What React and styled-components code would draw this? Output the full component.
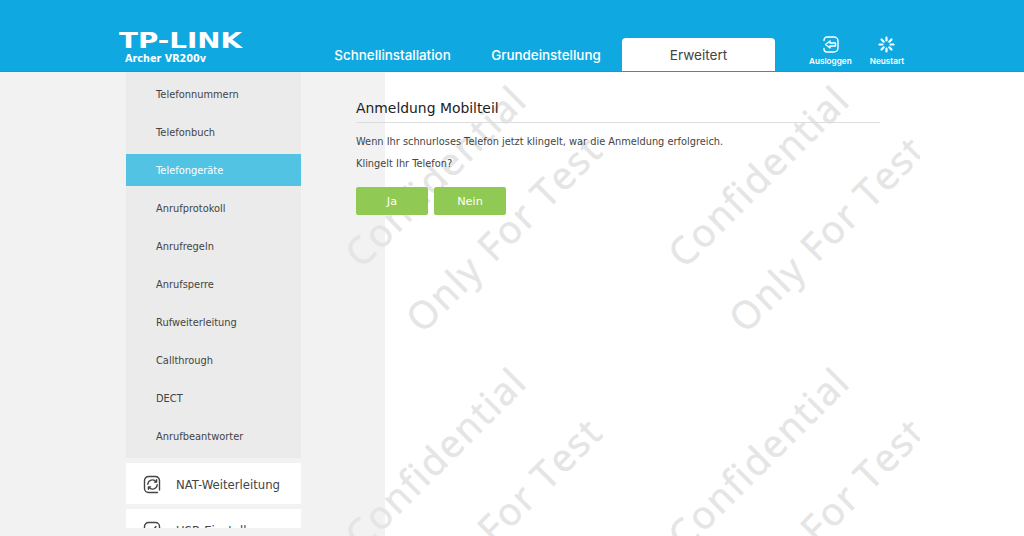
import React from 'react'
import styled, { createGlobalStyle } from 'styled-components'

const GlobalStyle = createGlobalStyle`
  html, body {
    margin: 0;
    padding: 0;
    height: 100%;
    background: #fff;
    overflow: hidden;
    font-family: "DejaVu Sans", Verdana, sans-serif;
  }
`

const Page = styled.div`
  width: 1024px;
  height: 536px;
  overflow: hidden;
  display: flex;
  flex-direction: column;
`

const Header = styled.header`
  height: 71px;
  flex: none;
  background: #10a8e0;
  border-bottom: 1px solid #0f9fd4;
  display: flex;
  align-items: flex-end;
  padding-left: 119px;
  box-sizing: content-box;
`

const Brand = styled.div`
  width: 197px;
  flex: none;
  color: #fff;
  padding-bottom: 6px;
`

const LogoSvg = styled.svg`
  display: block;
  width: 124px;
  height: 20px;
  margin-bottom: 2px;
  overflow: visible;
`

const Model = styled.div`
  font-family: "DejaVu Sans", sans-serif;
  font-size: 9.7px;
  font-weight: 700;
  line-height: 12px;
  padding-left: 6px;
`

const Tabs = styled.nav`
  display: flex;
  align-items: flex-end;
  height: 33px;
  margin-left: 18px;
`

const Tab = styled.div`
  height: 33px;
  box-sizing: border-box;
  display: flex;
  align-items: center;
  justify-content: center;
  font-family: "Inter", "Open Sans", sans-serif;
  font-size: ${p => (p.$active ? 13.6 : 13.4)}px;
  font-weight: ${p => (p.$active ? 400 : 500)};
  width: ${p => p.$w}px;
  margin-right: ${p => p.$gap || 0}px;
  color: ${p => (p.$active ? '#444' : '#fff')};
  background: ${p => (p.$active ? '#fff' : 'transparent')};
  border-radius: 4px 4px 0 0;
  padding-top: 1px;
  white-space: nowrap;
`

const Actions = styled.div`
  display: flex;
  gap: 18px;
  margin-left: 34px;
  padding-bottom: 4px;
`

const Action = styled.div`
  display: flex;
  flex-direction: column;
  align-items: center;
  color: #fff;
  font-family: "Inter", sans-serif;
  font-size: 8.2px;
  font-weight: 600;
  line-height: 11px;
  gap: 3px;
`

const Main = styled.main`
  position: relative;
  flex: 1;
  display: flex;
  min-height: 0;
`

const Side = styled.aside`
  width: 385px;
  flex: none;
  background: #f2f2f2;
  padding-left: 126px;
  box-sizing: border-box;
`

const SideScroll = styled.div`
  width: 175px;
  height: 456px;
  overflow: hidden;
  display: flex;
  flex-direction: column;
`

const SubMenu = styled.ul`
  list-style: none;
  margin: 0;
  padding: 3px 0 3px;
  background: #ebebeb;
  flex: none;
`

const SubItem = styled.li`
  height: 38px;
  box-sizing: border-box;
  display: flex;
  align-items: center;
  padding-left: 30px;
  font-size: 9.85px;
  color: ${p => (p.$active ? '#fff' : '#444')};
  background: ${p => (p.$active ? '#52c3e3' : 'transparent')};
  background-clip: content-box;
  padding-top: ${p => (p.$active ? 3 : 0)}px;
  padding-bottom: ${p => (p.$active ? 3 : 0)}px;
  ${p => p.$active && `
    padding-left: 0;
    text-indent: 30px;
    font-weight: 500;
  `}
`

const MenuCard = styled.div`
  height: 41px;
  flex: none;
  box-sizing: border-box;
  margin-top: 5px;
  padding-top: 2px;
  background: #fff;
  display: flex;
  align-items: center;
  gap: 14px;
  padding-left: 17px;
  font-size: 11.7px;
  color: #444;
`

const Watermark = styled.div`
  position: absolute;
  left: 345px;
  top: 0;
  width: 575px;
  height: 464px;
  overflow: hidden;
  pointer-events: none;
  display: grid;
  grid-template-columns: repeat(2, 323px);
  grid-auto-rows: 282px;
`

const Tile = styled.div`
  position: relative;
`

const Mark = styled.span`
  position: absolute;
  white-space: nowrap;
  font-family: "Open Sans", sans-serif;
  font-size: 38px;
  letter-spacing: 1.9px;
  color: #e5e5e5;
  -webkit-text-stroke: 0.6px #e5e5e5;
  line-height: 40px;
  transform-origin: 0 50%;
  transform: rotate(-45deg);
  left: ${p => p.$x}px;
  top: ${p => p.$y}px;
`

const Content = styled.section`
  position: relative;
  margin-left: -29px;
  width: 524px;
  padding-top: 26px;
`

const Title = styled.h2`
  margin: 0;
  font-size: 13.9px;
  font-weight: 400;
  line-height: 20px;
  color: #222;
  padding-bottom: 4px;
  border-bottom: 1px solid #ddd;
`

const Para = styled.p`
  margin: 0;
  font-size: 9.8px;
  line-height: 14px;
  color: #444;
  padding-top: ${p => p.$top}px;
`

const ButtonRow = styled.div`
  display: flex;
  gap: 6px;
  margin-top: 16px;
`

const Button = styled.button`
  width: 72px;
  height: 28px;
  border: none;
  border-radius: 2px;
  background: #91c955;
  color: #fff;
  font-family: "DejaVu Sans", sans-serif;
  font-size: 11.3px;
  font-weight: 500;
  padding: 0;
`

const items = [
  'Telefonnummern',
  'Telefonbuch',
  'Telefongeräte',
  'Anrufprotokoll',
  'Anrufregeln',
  'Anrufsperre',
  'Rufweiterleitung',
  'Callthrough',
  'DECT',
  'Anrufbeantworter',
]

const LogoutIcon = () => (
  <svg width="17" height="17" viewBox="0 0 17 17" fill="none" stroke="#fff" strokeWidth="1.4" strokeLinejoin="round" strokeLinecap="round">
    <path d="M2 4.5V4a3 3 0 0 1 3-3h7a4 4 0 0 1 4 4v7a4 4 0 0 1-4 4H5a3 3 0 0 1-3-3v-.5" />
    <path d="M3.5 8.5 8 5v2h5.5v3H8v2z" />
  </svg>
)

const RestartIcon = () => (
  <svg width="17" height="17" viewBox="0 0 17 17" fill="none" stroke="#fff" strokeWidth="2.2" strokeLinecap="round">
    <path d="M8.5 1.5v3M8.5 12.5v3M1.5 8.5h3M12.5 8.5h3M3.5 3.5l2.2 2.2M11.3 11.3l2.2 2.2M3.5 13.5l2.2-2.2M11.3 5.7l2.2-2.2" />
  </svg>
)

const NatIcon = () => (
  <svg width="19" height="19" viewBox="0 0 19 19" fill="none" stroke="#444" strokeWidth="1.4" strokeLinecap="round" strokeLinejoin="round">
    <path d="M16.5 15V5.5a4 4 0 0 0-4-4h-7a4 4 0 0 0-4 4v8a4 4 0 0 0 4 4h9" />
    <path d="M4.8 9.3a4.7 4.7 0 0 1 8.4-2.6M14.2 9.7a4.7 4.7 0 0 1-8.4 2.6" />
    <path d="M13.6 4.8v2.3h-2.2M5.4 14.2v-2.3h2.2" />
  </svg>
)

const UsbIcon = () => (
  <svg width="19" height="19" viewBox="0 0 19 19" fill="none" stroke="#444" strokeWidth="1.4" strokeLinecap="round" strokeLinejoin="round">
    <rect x="1.5" y="1.5" width="15" height="16" rx="4" />
    <path d="M5.5 9l2.5 2.5 5-6" />
  </svg>
)

const App = () => {
  return (
    <Page>
      <GlobalStyle />
      <Header>
        <Brand>
          <LogoSvg viewBox="0 0 124 20">
            <text
              x="0"
              y="17"
              fill="#fff"
              fontFamily="DejaVu Sans"
              fontWeight="700"
              fontSize="21"
              textLength="123"
              lengthAdjust="spacingAndGlyphs"
            >
              TP-LINK
            </text>
          </LogoSvg>
          <Model>Archer VR200v</Model>
        </Brand>
        <Tabs>
          <Tab $w={117} $gap={40}>Schnellinstallation</Tab>
          <Tab $w={110} $gap={21}>Grundeinstellung</Tab>
          <Tab $w={153} $active>Erweitert</Tab>
        </Tabs>
        <Actions>
          <Action>
            <LogoutIcon />
            Ausloggen
          </Action>
          <Action>
            <RestartIcon />
            Neustart
          </Action>
        </Actions>
      </Header>
      <Main>
        <Side>
          <SideScroll>
            <SubMenu>
              {items.map(item => (
                <SubItem key={item} $active={item === 'Telefongeräte'}>
                  {item}
                </SubItem>
              ))}
            </SubMenu>
            <MenuCard>
              <NatIcon />
              NAT-Weiterleitung
            </MenuCard>
            <MenuCard>
              <UsbIcon />
              USB-Einstellungen
            </MenuCard>
          </SideScroll>
        </Side>
        <Watermark>
          {[0, 1, 2, 3].map(i => (
            <Tile key={i}>
              <Mark $x={6} $y={167}>Confidential</Mark>
              <Mark $x={67} $y={232}>Only For Test</Mark>
            </Tile>
          ))}
        </Watermark>
        <Content>
          <Title>Anmeldung Mobilteil</Title>
          <Para $top={12}>Wenn Ihr schnurloses Telefon jetzt klingelt, war die Anmeldung erfolgreich.</Para>
          <Para $top={8}>Klingelt Ihr Telefon?</Para>
          <ButtonRow>
            <Button>Ja</Button>
            <Button>Nein</Button>
          </ButtonRow>
        </Content>
      </Main>
    </Page>
  )
}

export default App
